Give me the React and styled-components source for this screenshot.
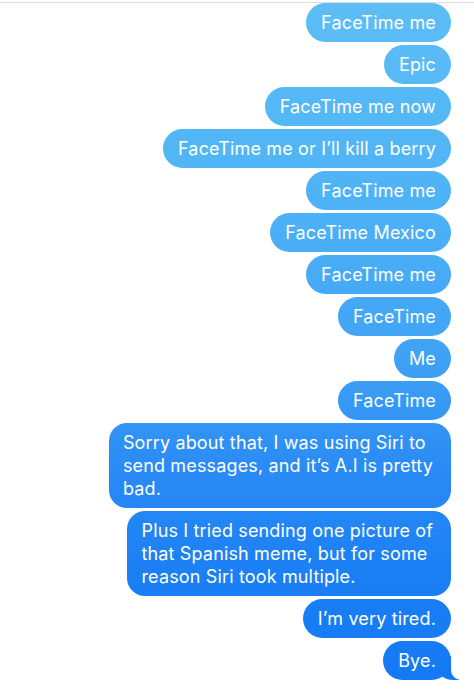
import React from 'react'
import styled, { createGlobalStyle, css } from 'styled-components'

const GlobalStyle = createGlobalStyle`
    html, body {
        margin: 0;
        padding: 0;
        background: #fff;
    }
    body {
        font-family: Inter, "Noto Sans", "Liberation Sans", sans-serif;
    }
`

const bubbleGradient = `
    background-image: linear-gradient(
        to bottom,
        #5dbef6 0%,
        #4db2f6 30%,
        #3fa2f5 52%,
        #2a8bf5 68%,
        #1a7ff5 85%,
        #1379f4 100%
    );
    background-attachment: fixed;
`

export const StyledScreen = styled.div`
    width: 474px;
    min-height: 689px;
    overflow: hidden;
`

export const StyledRule = styled.div`
    height: 2px;
    border-bottom: 1px solid #dcdcdc;
`

export const StyledThread = styled.div`
    display: flex;
    flex-direction: column;
    align-items: flex-end;
    gap: 3px;
    padding: 0 23px 0 0;
`

export const StyledBubble = styled.div`
    position: relative;
    ${bubbleGradient}
    color: #fff;
    font-size: 18px;
    line-height: 23px;
    padding: 8px 15px;
    border-radius: 19.5px;
    letter-spacing: 0.15px;
    white-space: nowrap;

    ${p => p.$multi && css`
        border-radius: 18px;
        padding: 8px 18px 8px 14px;
    `}

    ${p => p.$tail && css`
        &::before {
            content: "";
            position: absolute;
            right: -8px;
            bottom: 0;
            width: 22px;
            height: 24px;
            ${bubbleGradient}
            border-bottom-left-radius: 16px 14px;
        }
        &::after {
            content: "";
            position: absolute;
            right: -26px;
            bottom: 0;
            width: 26px;
            height: 24px;
            background: #fff;
            border-bottom-left-radius: 10px;
        }
    `}
`

const messages = [
    'FaceTime me',
    'Epic',
    'FaceTime me now',
    'FaceTime me or I\u2019ll kill a berry',
    'FaceTime me',
    'FaceTime Mexico',
    'FaceTime me',
    'FaceTime',
    'Me',
    'FaceTime',
    ['Sorry about that, I was using Siri to', 'send messages, and it\u2019s A.I is pretty', 'bad.'],
    ['Plus I tried sending one picture of', 'that Spanish meme, but for some', 'reason Siri took multiple.'],
    'I\u2019m very tired.',
    'Bye.',
]

const App = () => {
    return (
        <>
            <GlobalStyle />
            <StyledScreen>
                <StyledRule />
                <StyledThread>
                    {messages.map((m, i) => (
                        <StyledBubble
                            key={i}
                            $multi={Array.isArray(m)}
                            $tail={i === messages.length - 1}
                        >
                            {Array.isArray(m)
                                ? m.map((line, j) => (
                                    <React.Fragment key={j}>
                                        {line}
                                        {j < m.length - 1 && <br />}
                                    </React.Fragment>
                                ))
                                : m}
                        </StyledBubble>
                    ))}
                </StyledThread>
            </StyledScreen>
        </>
    )
}

export default App
